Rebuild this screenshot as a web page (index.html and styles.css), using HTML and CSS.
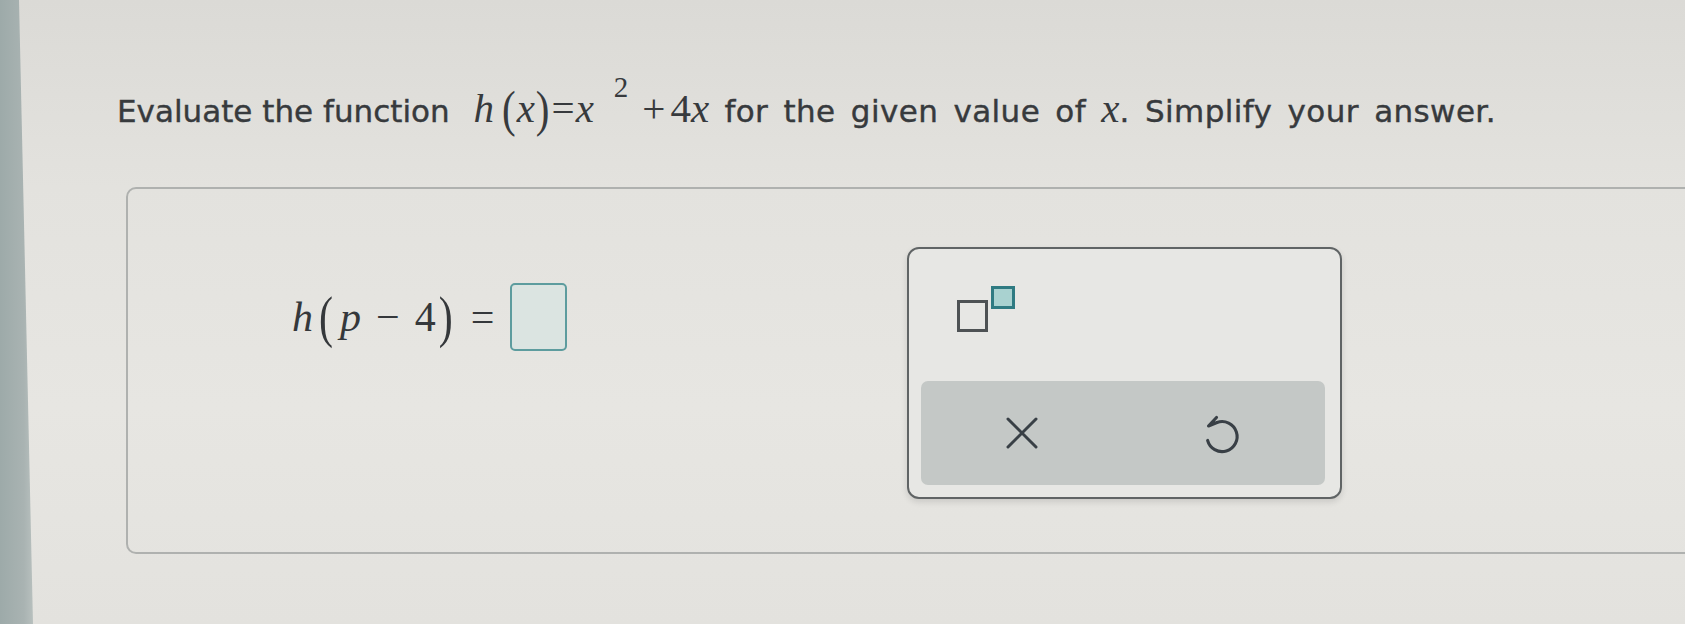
FILE: index.html
```html
<!DOCTYPE html>
<html lang="en">
<head>
<meta charset="utf-8">
<title>Evaluate the function</title>
<link rel="stylesheet" href="styles.css">
</head>
<body>
<div class="screen">
  <div class="strip"></div>
  <main class="content">
    <p class="prompt">Evaluate the function <span class="math lead"><span class="mi fn">h</span><span class="paren">(</span><span class="mi">x</span><span class="paren">)</span><span class="mo eq">=</span><span class="mi">x</span><sup class="sup">2</sup><span class="mo plus">+</span><span class="mn">4</span><span class="mi">x</span></span><span class="tail"> for the given value of <span class="math"><span class="mi">x</span></span>. Simplify your answer.</span></p>

    <section class="answer-card">
      <div class="equation">
        <span class="mi">h</span><span class="paren big open">(</span><span class="mi">p</span><span class="mo minus">−</span><span class="mn">4</span><span class="paren big close">)</span><span class="mo equals">=</span>
        <span class="input-box"></span>
      </div>

      <div class="palette">
        <div class="palette-top">
          <button class="sup-btn" type="button" aria-label="exponent">
            <span class="sup-base"></span><span class="sup-exp"></span>
          </button>
        </div>
        <div class="palette-actions">
          <button class="action" type="button" aria-label="clear">
            <svg width="32" height="32" viewBox="0 0 32 32"><path d="M2 2 L30 30 M30 2 L2 30" fill="none" stroke="#394046" stroke-width="3" stroke-linecap="round"/></svg>
          </button>
          <button class="action" type="button" aria-label="undo">
            <svg width="42" height="46" viewBox="0 0 42 46"><path d="M14 12.5 A15 15 0 1 1 4.6 30.4 M14 12.5 L5.5 16 L13.5 7.5" fill="none" stroke="#394046" stroke-width="3.1" stroke-linecap="round" stroke-linejoin="round"/></svg>
          </button>
        </div>
      </div>
    </section>
  </main>
</div>
</body>
</html>
```

FILE: styles.css
```css
html, body {
  margin: 0;
  padding: 0;
}

body {
  width: 1685px;
  height: 624px;
  overflow: hidden;
  background: #e3e2de;
}

.screen {
  display: flex;
  width: 1685px;
  height: 624px;
  background: linear-gradient(180deg, #dbdad6 0%, #e3e2de 30%, #e7e6e2 65%, #e3e2de 100%);
}

.strip {
  flex: 0 0 34px;
  background: linear-gradient(90deg, #9daaa9 0%, #a9b3b2 70%, #b9c1bf 100%);
  clip-path: polygon(0 0, 19px 0, 33px 100%, 0 100%);
}

.content {
  flex: 1;
  padding-top: 87px;
  padding-left: 83px;
  min-width: 0;
}

.prompt {
  margin: 0;
  font-family: "DejaVu Sans", Verdana, sans-serif;
  font-size: 31px;
  line-height: 40px;
  color: #373a3d;
  -webkit-text-stroke: 0.4px #373a3d;
  white-space: nowrap;
}

.tail {
  word-spacing: 5px;
  letter-spacing: 0.4px;
}

.math {
  font-family: "Liberation Serif", "Times New Roman", serif;
  font-size: 41px;
  line-height: 0;
  letter-spacing: 0;
  word-spacing: 0;
  -webkit-text-stroke: 0;
}

.math.lead {
  margin-left: 14px;
}

.mi {
  font-style: italic;
}

.fn {
  margin-right: 7px;
}

.paren {
  display: inline-block;
  transform: scaleY(1.25);
  font-style: normal;
  padding: 0 1px;
}

.eq {
  margin: 0 1px;
}

.sup {
  font-size: 29px;
  line-height: 0;
  vertical-align: 25px;
  margin-left: 20px;
  margin-right: 14px;
}

.plus {
  margin-right: 5px;
}

.answer-card {
  margin-top: 56px;
  margin-left: 9px;
  width: 1650px;
  height: 367px;
  box-sizing: border-box;
  border: 2px solid #afb1af;
  border-radius: 10px;
  display: flex;
  align-items: flex-start;
  padding-top: 58px;
  padding-left: 164px;
}

.equation {
  display: flex;
  align-items: center;
  margin-top: 36px;
  font-family: "Liberation Serif", "Times New Roman", serif;
  font-size: 42px;
  color: #35383b;
  line-height: 1;
}

.equation .paren.big {
  transform: scaleY(1.35);
  padding: 0;
}

.equation .open {
  margin: 0 7px 0 6px;
}

.equation .close {
  margin: 0 0 0 3px;
}

.minus {
  margin: 0 15px;
}

.equals {
  margin-left: 18px;
}

.input-box {
  display: block;
  width: 57px;
  height: 68px;
  box-sizing: border-box;
  margin-left: 16px;
  border: 2px solid #5d9c9e;
  border-radius: 5px;
  background: #dbe4e1;
}

.palette {
  margin-left: 340px;
  width: 435px;
  height: 252px;
  box-sizing: border-box;
  border: 2px solid #606465;
  border-radius: 12px;
  background: #e7e7e4;
  box-shadow: 0 3px 6px rgba(0, 0, 0, 0.12);
  display: flex;
  flex-direction: column;
  padding: 0 15px 12px 12px;
}

.palette-top {
  height: 132px;
  box-sizing: border-box;
  padding-top: 37px;
  padding-left: 36px;
}

.sup-btn {
  display: flex;
  align-items: flex-start;
  padding: 0;
  border: 0;
  background: none;
}

.sup-base {
  display: block;
  width: 31px;
  height: 32px;
  box-sizing: border-box;
  margin-top: 14px;
  border: 3px solid #4e5254;
}

.sup-exp {
  display: block;
  width: 24px;
  height: 23px;
  box-sizing: border-box;
  margin-left: 3px;
  border: 3px solid #2f7b82;
  background: #a9d2d0;
}

.palette-actions {
  flex: 1;
  display: grid;
  grid-template-columns: 1fr 1fr;
  background: #c4c8c6;
  border-radius: 7px;
}

.action {
  display: flex;
  align-items: center;
  justify-content: center;
  padding: 0;
  border: 0;
  background: none;
}
```
